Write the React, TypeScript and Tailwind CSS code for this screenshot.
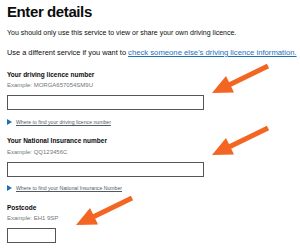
import React from "react";

function Arrow({ className }: { className: string }) {
  return (
    <svg className={className} width="62" height="34" viewBox="0 0 62 34" fill="none">
      <line x1="58" y1="3" x2="19" y2="22" stroke="#f26522" strokeWidth="5" strokeLinecap="butt" />
      <polygon points="2,30 24,29.4 16,13" fill="#f26522" />
    </svg>
  );
}

function Hint({ text }: { text: string }) {
  return (
    <div className="flex items-center gap-[4px] leading-[10px] text-[5.15px] text-[#505a5f]">
      <svg width="5" height="6" viewBox="0 0 5 6">
        <polygon points="0,0 5,3 0,6" fill="#1d70b8" />
      </svg>
      <span className="underline">{text}</span>
    </div>
  );
}

export default function App() {
  return (
    <div className="relative h-[252px] w-[300px] overflow-hidden bg-white pl-[7px] text-[#0b0c0c] font-['Liberation_Sans',Arial,sans-serif]">
      <h1 className="mt-[2px] text-[15px] font-bold leading-[20px] tracking-[-0.4px]">Enter details</h1>
      <p className="mt-[6px] text-[7px] leading-[10px]">
        You should only use this service to view or share your own driving licence.
      </p>
      <p className="mt-[10px] whitespace-nowrap text-[7.4px] leading-[10px]">
        Use a different service if you want to{" "}
        <a className="text-[7.7px] text-[#1d70b8] underline">check someone else's driving licence information.</a>
      </p>

      <div className="mt-[12px] text-[6.5px] font-bold leading-[10px]">Your driving licence number</div>
      <div className="text-[6px] leading-[10px] text-[#6f777b]">Example: MORGA657054SM9U</div>
      <div className="mt-[5px] h-[15px] w-[197px] border-[1.5px] border-[#555]" />
      <div className="mt-[7px]">
        <Hint text="Where to find your driving licence number" />
      </div>

      <div className="mt-[9px] text-[6.5px] font-bold leading-[10px]">Your National Insurance number</div>
      <div className="mt-[1px] text-[6px] leading-[10px] text-[#6f777b]">Example: QQ123456C</div>
      <div className="mt-[5px] h-[15px] w-[197px] border-[1.5px] border-[#555]" />
      <div className="mt-[6px]">
        <Hint text="Where to find your National Insurance Number" />
      </div>

      <div className="mt-[10px] text-[6.5px] font-bold leading-[10px]">Postcode</div>
      <div className="text-[6px] leading-[10px] text-[#6f777b]">Example: EH1 9SP</div>
      <div className="mt-[5px] h-[15px] w-[49px] border-[1.5px] border-[#555]" />

      <Arrow className="absolute left-[210px] top-[63px]" />
      <Arrow className="absolute left-[210px] top-[125px]" />
      <Arrow className="absolute left-[74px] top-[195px]" />
    </div>
  );
}
